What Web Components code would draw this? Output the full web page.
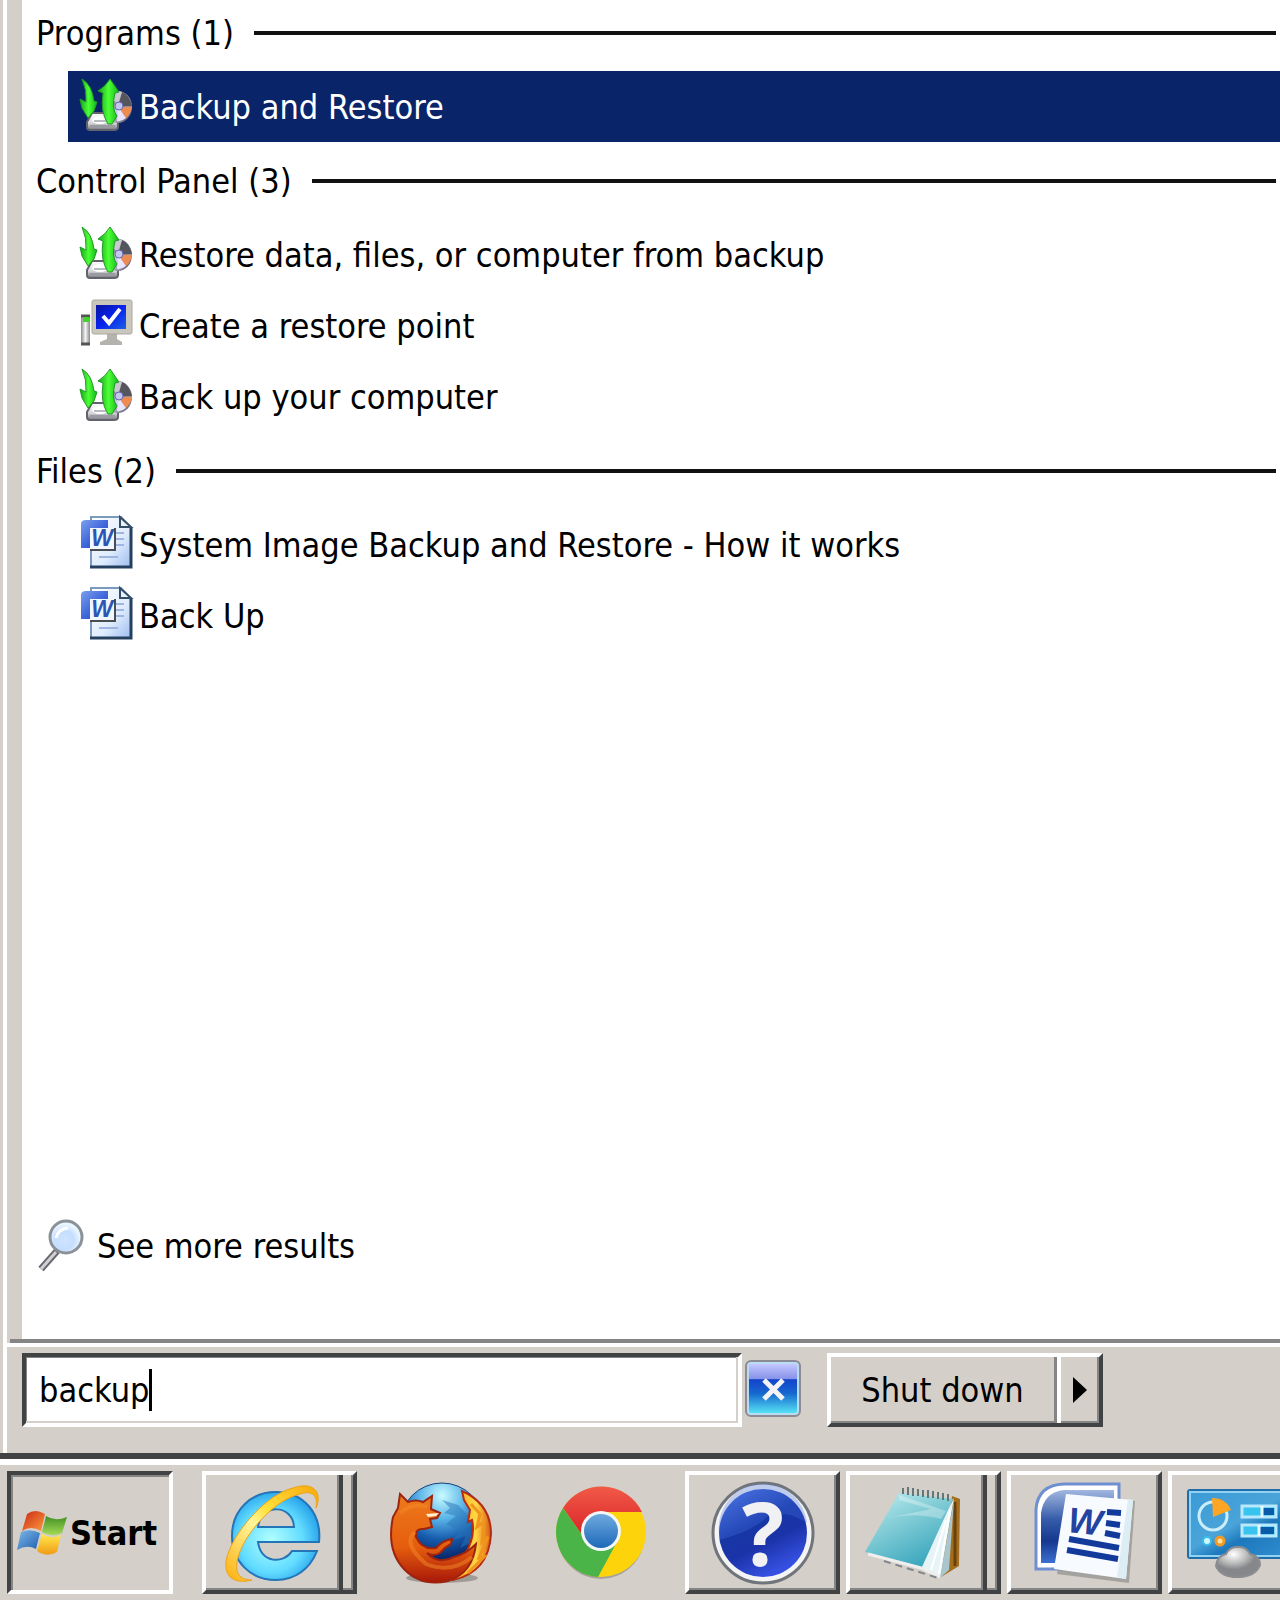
<!DOCTYPE html>
<html lang="en">
<head>
<meta charset="utf-8">
<title>Start menu</title>
<style>
    html, body {
        margin: 0;
        height: 100%;
        overflow: hidden;
    }

    body {
        --face: #d4cfc8;
        --dark: #404244;
        --shade: #858585;
        --select: #0a246a;
        color: #000;
        background: var(--face);
        font: 34px/40px "DejaVu Sans Condensed", "DejaVu Sans", sans-serif;
    }
</style>
</head>
<body>
<start-screen>
    <search-results>
        <result-group name="Programs (1)">
            <result-item icon="backup" selected>Backup and Restore</result-item>
        </result-group>
        <result-group name="Control Panel (3)">
            <result-item icon="backup">Restore data, files, or computer from backup</result-item>
            <result-item icon="monitor">Create a restore point</result-item>
            <result-item icon="backup">Back up your computer</result-item>
        </result-group>
        <result-group name="Files (2)">
            <result-item icon="doc">System Image Backup and Restore - How it works</result-item>
            <result-item icon="doc">Back Up</result-item>
        </result-group>
        <more-link slot="more">See more results</more-link>
    </search-results>
    <search-bar slot="bar" value="backup"></search-bar>
    <task-bar slot="tasks">
        <start-button>Start</start-button>
        <task-button icon="ie" label="Internet Explorer" stacked></task-button>
        <task-button icon="firefox" label="Firefox" flat></task-button>
        <task-button icon="chrome" label="Chrome" flat></task-button>
        <task-button icon="help" label="Help"></task-button>
        <task-button icon="notepad" label="Notepad" stacked></task-button>
        <task-button icon="word" label="Word"></task-button>
        <task-button icon="panel" label="Control Panel"></task-button>
    </task-bar>
</start-screen>

<script>
const icons = {
    backup: `<svg viewBox="0 0 52 54" width="52" height="54">
        <defs>
            <linearGradient id="dr" x2="0" y2="1"><stop offset="0" stop-color="#fff"/><stop offset=".6" stop-color="#d5d5da"/><stop offset="1" stop-color="#777880"/></linearGradient>
            <linearGradient id="dc" x2="1" y2="1"><stop offset="0" stop-color="#f0f0f0"/><stop offset=".3" stop-color="#77767c"/><stop offset=".55" stop-color="#d0cfe8"/><stop offset="1" stop-color="#37363c"/></linearGradient>
            <linearGradient id="gr" x2="1"><stop offset="0" stop-color="#15a51a"/><stop offset=".5" stop-color="#4dff36"/><stop offset="1" stop-color="#12b51a"/></linearGradient>
        </defs>
        <path d="M12 35H33L38 44V49Q38 52 34 52H10Q7 52 7 49V44Z" fill="url(#dr)" stroke="#62636b" stroke-width="2"/>
        <path d="M10 48H35" stroke="#9a9aa2" stroke-width="2"/>
        <ellipse cx="20" cy="42" rx="8" ry="4" fill="#fff"/>
        <path d="M14 43H26" stroke="#b9bac2" stroke-width="2"/>
        <ellipse cx="38" cy="29" rx="14" ry="16" fill="url(#dc)"/>
        <path d="M38 29L42 14Q50 17 52 28Z" fill="#55555d"/>
        <path d="M28 18Q34 11 42 14L38 26Z" fill="#c9c9cf"/>
        <path d="M38 29L52 29Q51 36 46 40Z" fill="#ee8b50"/>
        <path d="M38 29L46 40Q41 44 37 43Z" fill="#e9e4ff"/>
        <circle cx="39" cy="28" r="4" fill="#c5c7ed" stroke="#6569b5"/>
        <path d="M2 1Q12 7 14 23L17 24L14 33L8 40L2 30L0 21L6 24Q7 12 2 1Z" fill="url(#gr)" stroke="#209a25"/>
        <path d="M30 1L39 14L35 15Q31 31 37 38L32 46H28Q20 34 23 15L18 13Q26 8 30 1Z" fill="url(#gr)" stroke="#209a25"/>
    </svg>`,
    monitor: `<svg viewBox="0 0 52 54" width="52" height="54">
        <defs>
            <linearGradient id="sc" x2="1" y2="1"><stop offset="0" stop-color="#0714a0"/><stop offset=".5" stop-color="#0823ee"/><stop offset="1" stop-color="#1c62e4"/></linearGradient>
            <linearGradient id="tw" x2="1"><stop offset="0" stop-color="#8b8b8b"/><stop offset=".5" stop-color="#f4f4f4"/><stop offset="1" stop-color="#888"/></linearGradient>
        </defs>
        <path d="M27 36H37V42L42 45V48H20V45L27 42Z" fill="#b4b3ad"/>
        <rect x="12" y="3" width="40" height="34" rx="2" fill="#c9c6bc" stroke="#aaa89f"/>
        <rect x="16" y="8" width="30" height="24" fill="url(#sc)"/>
        <path d="M23 19L29 26L40 12" fill="none" stroke="#fff" stroke-width="4"/>
        <rect x="1" y="18" width="9" height="30" fill="url(#tw)"/>
        <path d="M1 19H10M1 47H10" stroke="#555" stroke-width="3"/>
        <rect x="3" y="20" width="6" height="5" fill="#41d52b"/>
    </svg>`,
    doc: `<svg viewBox="0 0 52 54" width="52" height="54">
        <defs>
            <linearGradient id="pg" x2="1" y2="1"><stop offset="0" stop-color="#fff"/><stop offset=".6" stop-color="#dfecfd"/><stop offset="1" stop-color="#9cbcf0"/></linearGradient>
            <linearGradient id="bl" x2="1" y2="1"><stop offset="0" stop-color="#7ba0ee"/><stop offset=".5" stop-color="#4269dc"/><stop offset="1" stop-color="#1c3fae"/></linearGradient>
        </defs>
        <path d="M11 1H41L51 12V51H11Z" fill="url(#pg)" stroke="#7b9bbd" stroke-width="2"/>
        <path d="M51 11V51H10" fill="none" stroke="#25405f" stroke-width="3"/>
        <path d="M40 1V11H51Z" fill="#eaf3fc" stroke="#344d69" stroke-width="2"/>
        <path d="M36 17H44M36 23H44M36 29H44M19 41H38" stroke="#9fb6e2" stroke-width="2"/>
        <path d="M1 8Q1 4 6 4H28V12H10V32H1Z" fill="url(#bl)"/>
        <rect x="10" y="12" width="25" height="21" fill="#f1f7ff"/>
        <path d="M35 12V34H10" fill="none" stroke="#4a4e52" stroke-width="2"/>
        <text x="22" y="30" text-anchor="middle" font-family="Liberation Sans" font-size="23" font-weight="700" font-style="italic" fill="#2c56b5">W</text>
    </svg>`,
    search: `<svg viewBox="0 0 46 54" width="46" height="54">
        <defs><radialGradient id="ln" cx=".45" cy=".6"><stop offset="0" stop-color="#cfe3ff"/><stop offset=".6" stop-color="#c5deff"/><stop offset="1" stop-color="#eaf6ff"/></radialGradient></defs>
        <path d="M3 50L19 32" stroke="#66666c" stroke-width="7"/>
        <path d="M3 50L18 33" stroke="#d2d0d6" stroke-width="3"/>
        <circle cx="28" cy="18" r="16" fill="url(#ln)" stroke="#8b9198" stroke-width="3"/>
        <path d="M18 19Q20 10 30 9" fill="none" stroke="#fff" stroke-width="3"/>
    </svg>`,
    flag: `<svg viewBox="0 0 50 46" width="50" height="46">
        <defs>
            <linearGradient id="f1" y2="1"><stop offset="0" stop-color="#c72814"/><stop offset="1" stop-color="#ff9a3d"/></linearGradient>
            <linearGradient id="f2" x2="0" y2="1"><stop offset="0" stop-color="#3f8f25"/><stop offset="1" stop-color="#a5db55"/></linearGradient>
            <linearGradient id="f3" y2="1"><stop offset="0" stop-color="#7fb8ea"/><stop offset="1" stop-color="#1d5fae"/></linearGradient>
            <linearGradient id="f4" x2="0" y2="1"><stop offset="0" stop-color="#ffe94d"/><stop offset="1" stop-color="#f09b15"/></linearGradient>
        </defs>
        <path d="M10 4Q18-2 28 4L24 21Q14 15 5 21Z" fill="url(#f1)"/>
        <path d="M29 6Q38 12 50 7L45 23Q35 28 25 22Z" fill="url(#f2)"/>
        <path d="M4 22Q13 18 23 23L19 39Q10 34 0 40Z" fill="url(#f3)"/>
        <path d="M25 24Q34 30 44 25L40 42Q30 48 20 41Z" fill="url(#f4)"/>
    </svg>`,
    ie: `<svg viewBox="0 0 96 98" width="96" height="98">
        <defs>
            <radialGradient id="eb" cx=".45" cy=".55" r=".6"><stop offset="0" stop-color="#b2ffff"/><stop offset=".6" stop-color="#62dcff"/><stop offset="1" stop-color="#1f9be8"/></radialGradient>
            <linearGradient id="er" x1="1" y1="0" x2="0" y2="1"><stop offset="0" stop-color="#f8a90d"/><stop offset=".4" stop-color="#ffe03b"/><stop offset=".55" stop-color="#fff69c"/><stop offset="1" stop-color="#fdae0c"/></linearGradient>
        </defs>
        <path fill-rule="evenodd" d="M51 8C79 8 97 30 94 58H33C36 80 59 80 67 67H92C85 85 70 96 51 96C25 96 7 77 7 52C7 26 26 8 51 8ZM33 43H69C68 20 36 19 33 43Z" fill="url(#eb)" stroke="#2474b8" stroke-width="2"/>
        <path d="M91 24C98 8 88-3 68 4C43 10 14 42 4 67C-4 86 3 102 27 96C8 96 9 80 17 63C27 42 52 16 72 11C87 5 93 11 91 24Z" fill="url(#er)" stroke="#eda217"/>
    </svg>`,
    firefox: `<svg viewBox="0 0 102 102" width="102" height="102">
        <defs>
            <radialGradient id="gl" cx=".5" cy=".15" r=".8"><stop offset="0" stop-color="#c8fbff"/><stop offset=".35" stop-color="#59b3e8"/><stop offset=".65" stop-color="#175cae"/><stop offset="1" stop-color="#061c5c"/></radialGradient>
            <linearGradient id="fx" x2="0" y2="1"><stop offset="0" stop-color="#ee7a1c"/><stop offset=".6" stop-color="#e55d0e"/><stop offset="1" stop-color="#a81809"/></linearGradient>
            <linearGradient id="ft" x2="1"><stop offset="0" stop-color="#ff9a16"/><stop offset=".6" stop-color="#ffd945"/><stop offset="1" stop-color="#d95a12"/></linearGradient>
        </defs>
        <ellipse cx="52" cy="96" rx="36" ry="5" fill="#000" opacity=".25"/>
        <circle cx="52" cy="43" r="42" fill="url(#gl)" stroke="#173f7c"/>
        <path d="M52 18L60 26L54 31L66 34L56 42L70 49L63 58L76 54L70 66L82 60L80 35L68 23Z" fill="#2a76b8" opacity=".5"/>
        <path d="M72 9Q101 22 101 52Q99 90 63 98Q68 83 80 72L74 74Q86 55 82 38L78 40L80 28L74 18Z" fill="url(#ft)" stroke="#b62d16" stroke-width="2"/>
        <path d="M81 22L90 32L87 45L94 40L92 60L98 55L89 76L94 75L78 91" fill="none" stroke="#f1941d" stroke-width="3"/>
        <path d="M10 12L18 20Q26 17 33 20L42 14L41 27L50 31L47 36L40 37L42 45L34 47Q25 46 26 55Q32 68 46 66Q53 58 62 57L61 62Q55 65 50 71Q43 75 37 71Q48 83 64 75Q76 72 86 62Q83 91 58 99Q31 105 14 87Q-4 68 3 35L8 26Z" fill="url(#fx)" stroke="#9c2410" stroke-width="2"/>
        <path d="M10 31Q22 20 37 25M25 50Q12 61 36 82Q62 92 82 75" fill="none" stroke="#f48a28" stroke-width="4" opacity=".5"/>
        <path d="M36 32L49 31L46 34L38 35Z" fill="#fff0d5"/>
    </svg>`,
    chrome: `<svg viewBox="0 0 94 96" width="94" height="96">
        <defs>
            <linearGradient id="cr" x2="0" y2="1"><stop offset="0" stop-color="#f15a47"/><stop offset="1" stop-color="#d9252a"/></linearGradient>
            <linearGradient id="cb" x2="0" y2="1"><stop offset="0" stop-color="#6eaae0"/><stop offset="1" stop-color="#1e69b8"/></linearGradient>
        </defs>
        <ellipse cx="46" cy="49" rx="44" ry="45" fill="#000" opacity=".22"/>
        <circle cx="46" cy="47" r="45" fill="#fdd30b"/>
        <path d="M8 23A45 45 0 0 1 87 27H46A19 19 0 0 0 27 50Z" fill="url(#cr)"/>
        <path d="M8 23A45 45 0 0 0 43 92L62 57Q54 66 40 64Q30 59 27 50Z" fill="#4ab449"/>
        <circle cx="46" cy="46" r="20" fill="#f4f6f8"/>
        <circle cx="46" cy="46" r="17" fill="url(#cb)"/>
    </svg>`,
    help: `<svg viewBox="0 0 104 104" width="104" height="104">
        <defs>
            <linearGradient id="hb" x2=".5" y2="1"><stop offset="0" stop-color="#5078e8"/><stop offset=".48" stop-color="#1737a5"/><stop offset=".7" stop-color="#1b32a8"/><stop offset="1" stop-color="#3550e0"/></linearGradient>
        </defs>
        <circle cx="52" cy="52" r="50" fill="#f4f4f4" stroke="#70757b" stroke-width="3"/>
        <circle cx="52" cy="52" r="44" fill="url(#hb)"/>
        <path d="M8 59Q43 50 57 35Q75 28 96 42A44 44 0 0 0 8 52Z" fill="#4672e0" opacity=".3"/>
        <text x="52" y="85" text-anchor="middle" font-family="Open Sans" font-size="88" font-weight="700" fill="#f1f1f3">?</text>
    </svg>`,
    notepad: `<svg viewBox="0 0 106 96" width="106" height="96">
        <defs>
            <linearGradient id="nt" x2=".6" y2="1"><stop offset="0" stop-color="#c4f1f4"/><stop offset=".4" stop-color="#8bd1d9"/><stop offset="1" stop-color="#3ba7bd"/></linearGradient>
        </defs>
        <path d="M88 11L96 14L95 81L77 92Z" fill="#a46d1e"/>
        <path d="M91 17V81" stroke="#68420d" stroke-width="3"/>
        <path d="M90 13L76 93L56 81Z" fill="#e6f4f7"/>
        <path d="M90 14L85 85L76 93Z" fill="#a9c6cc"/>
        <path d="M86 25L75 89M82 35L67 85" stroke="#fff" stroke-width="2"/>
        <path d="M35 8L89 14L58 82L1 67Z" fill="url(#nt)"/>
        <path d="M35 15L67 24L24 33Q51 27 77 34L82 26L35 10Z" fill="#fff" opacity=".3"/>
        <path d="M4 69L57 83L76 92" fill="none" stroke="#eee" stroke-width="3"/>
        <path d="M20 76L74 93" stroke="#80868a" stroke-width="2" stroke-dasharray="7 5"/>
        <path d="M39 3V9M44 2V10M49 3V11M54 4V11M59 5V12M64 5V13M69 6V13M74 7V14M79 8V15M84 9V16" stroke="#62777a" stroke-width="2"/>
    </svg>`,
    word: `<svg viewBox="0 0 102 102" width="102" height="102">
        <defs><linearGradient id="wb" x2="0" y2="1"><stop offset="0" stop-color="#a2b7e0"/><stop offset=".4" stop-color="#365ca9"/><stop offset=".7" stop-color="#16388f"/><stop offset="1" stop-color="#3b70d0"/></linearGradient></defs>
        <path d="M2 87V27Q4 3 30 2H85V87Z" fill="#fff" stroke="#6e8fd0" stroke-width="3"/>
        <path d="M7 81V31Q10 10 30 8H80V81Z" fill="url(#wb)"/>
        <path d="M36 15L101 19L95 101L23 92Z" fill="#8a8b88" opacity=".65"/>
        <path d="M32 12L99 18L92 97L20 87Z" fill="#f7fbff"/>
        <path d="M94 17L99 18L92 97L83 95Z" fill="#dceef4"/>
        <text x="33" y="50" transform="rotate(6 33 50)" font-family="Liberation Sans" font-size="36" font-weight="700" font-style="italic" fill="#2443a0">W</text>
        <path d="M73 30L87 31M72 41L86 43M71 51L86 54M35 57L85 66M33 68L84 77" stroke="#123a9b" stroke-width="6"/>
    </svg>`,
    panel: `<svg viewBox="0 0 120 92" width="120" height="92">
        <defs>
            <linearGradient id="pb" x2="1" y2="1"><stop offset="0" stop-color="#3b9ad6"/><stop offset=".45" stop-color="#4aa4d9"/><stop offset=".6" stop-color="#1d78bd"/><stop offset="1" stop-color="#3492d2"/></linearGradient>
            <radialGradient id="bt" cx=".4" cy=".25"><stop offset="0" stop-color="#fff"/><stop offset=".6" stop-color="#bbb"/><stop offset="1" stop-color="#85878a"/></radialGradient>
        </defs>
        <rect x="1" y="2" width="118" height="70" rx="3" fill="#1f6eab"/>
        <rect x="4" y="5" width="112" height="64" fill="url(#pb)" stroke="#91d2f3" stroke-width="2"/>
        <circle cx="27" cy="29" r="14" fill="none" stroke="#c9edf9" stroke-width="3"/>
        <path d="M26 11Q40 11 45 23L27 30Z" fill="#ffa525"/>
        <rect x="56" y="19" width="34" height="11" fill="#39c4ef" stroke="#b7e8fb" stroke-width="3"/>
        <rect x="56" y="38" width="34" height="11" fill="#39c4ef" stroke="#b7e8fb" stroke-width="3"/>
        <path d="M77 21H88V28H77ZM74 40H88V47H74Z" fill="#0a5ba8"/>
        <path d="M76 19V30M73 38V49" stroke="#e5faff" stroke-width="3"/>
        <circle cx="21" cy="54" r="4" fill="#cff7ff" stroke="#39bee8" stroke-width="2"/>
        <circle cx="34" cy="54" r="4" fill="#ffe1a0" stroke="#f39a24" stroke-width="3"/>
        <path d="M30 79Q31 69 40 67Q44 59 52 60Q60 59 64 67Q74 69 74 78Q69 90 51 90Q35 90 30 79Z" fill="url(#bt)" stroke="#8a8c90" stroke-width="2"/>
    </svg>`,
    cross: `<svg viewBox="0 0 56 57" width="56" height="57">
        <defs><linearGradient id="xb" x2="0" y2="1"><stop offset="0" stop-color="#c4c7ff"/><stop offset=".3" stop-color="#8792e8"/><stop offset=".32" stop-color="#1444cc"/><stop offset=".6" stop-color="#1668cf"/><stop offset="1" stop-color="#55e2f5"/></linearGradient></defs>
        <rect x="1" y="1" width="54" height="55" rx="5" fill="#b8dcf0" stroke="#8d8b96" stroke-width="2"/>
        <rect x="4" y="4" width="48" height="49" rx="2" fill="url(#xb)"/>
        <path d="M19 20L38 39M38 20L19 39" stroke="#f2f2f7" stroke-width="5"/>
    </svg>`
};

const base = `
    :host, * { box-sizing: border-box; }
    svg { display: block; flex: none; overflow: visible; }
    button, input { margin: 0; padding: 0; border: 0; border-radius: 0; font: inherit; color: inherit; background: none; outline: none; }
`;

function define(tag, render) {
    customElements.define(tag, class extends HTMLElement {
        constructor() {
            super();
            this.attachShadow({ mode: "open" });
        }

        connectedCallback() {
            const template = document.createElement("template");
            template.innerHTML = "<style>" + base + "</style>" + render(this);
            this.shadowRoot.replaceChildren(template.content.cloneNode(true));
        }
    });
}

define("start-screen", () => `
    <style>
        :host { display: flex; flex-direction: column; height: 100%; }
        .menu { flex: 1; min-height: 0; display: flex; flex-direction: column; margin-left: 3px; border-left: 4px solid #fff; }
        .results { flex: 1; min-height: 0; display: flex; margin-left: 3px; padding-left: 12px; border-bottom: 4px solid var(--shade); }
    </style>
    <div class="menu">
        <div class="results"><slot></slot></div>
        <slot name="bar"></slot>
    </div>
    <slot name="tasks"></slot>
`);

define("search-results", () => `
    <style>
        :host { flex: 1; min-width: 0; display: flex; flex-direction: column; justify-content: space-between; overflow: hidden; background: #fff; }
        .groups { margin-top: -6px; }
        .more { padding: 0 16px 66px; }
    </style>
    <div class="groups"><slot></slot></div>
    <div class="more"><slot name="more"></slot></div>
`);

define("result-group", el => `
    <style>
        :host { display: block; }
        header { display: flex; align-items: center; gap: 20px; height: 77px; padding: 0 4px 0 14px; }
        h2 { margin: 0; font: inherit; white-space: nowrap; }
        .rule { flex: 1; height: 4px; background: #111; }
    </style>
    <header><h2>${el.getAttribute("name")}</h2><span class="rule"></span></header>
    <slot></slot>
`);

define("result-item", el => `
    <style>
        :host { display: block; margin-left: 46px; }
        :host([selected]) { color: #fff; background: var(--select); }
        button { display: flex; align-items: center; gap: 7px; width: 100%; height: 71px; padding-left: 12px; text-align: left; white-space: nowrap; }
        svg { margin-bottom: 4px; }
    </style>
    <button type="button">${icons[el.getAttribute("icon")]}<span><slot></slot></span></button>
`);

define("more-link", () => `
    <style>
        :host { display: block; }
        a { display: flex; align-items: center; gap: 13px; color: inherit; text-decoration: none; }
    </style>
    <a href="#">${icons.search}<span><slot></slot></span></a>
`);

define("search-bar", el => `
    <style>
        :host { flex: none; display: flex; align-items: flex-start; height: 110px; padding: 6px 0 0 15px; border-top: 4px solid #fff; }
        .field { flex: 0 1 720px; display: flex; align-items: center; height: 74px; padding-left: 13px; background: #fff;
            border: 4px solid; border-color: var(--dark) #fff #fff var(--dark); box-shadow: inset -2px -2px var(--face), inset 1px 1px var(--shade); }
        input { field-sizing: content; height: 44px; }
        .caret { width: 3px; height: 42px; background: #000; }
        .clear { margin: 7px 26px 0 3px; }
        .split { flex: none; display: flex; height: 74px; border: 4px solid; border-color: #fff var(--dark) var(--dark) #fff; box-shadow: inset -2px -2px var(--shade); }
        .down { width: 226px; border-right: 3px solid var(--shade); }
        .more { display: flex; align-items: center; width: 42px; padding-left: 12px; border-left: 4px solid #fff; }
    </style>
    <label class="field">
        <input type="text" aria-label="Search programs and files" value="${el.getAttribute("value")}"><span class="caret"></span>
    </label>
    <button class="clear" type="button" aria-label="Clear">${icons.cross}</button>
    <div class="split">
        <button class="down" type="button">Shut down</button>
        <button class="more" type="button" aria-label="More options"><svg width="14" height="26" viewBox="0 0 14 26"><path d="M0 0L14 13L0 26Z"/></svg></button>
    </div>
`);

define("task-bar", () => `
    <style>
        :host { flex: none; display: block; border-top: 6px solid var(--dark); }
        nav { display: flex; gap: 6px; height: 141px; padding: 6px 0 6px 7px; border-top: 6px solid #fff; overflow: hidden; }
    </style>
    <nav><slot></slot></nav>
`);

define("start-button", () => `
    <style>
        :host { flex: none; display: block; margin-right: 23px; }
        button { display: flex; align-items: center; gap: 3px; width: 166px; height: 100%; padding-left: 6px; font-weight: 700;
            border: 4px solid; border-color: var(--dark) #fff #fff var(--dark); box-shadow: inset 2px 2px var(--shade); }
    </style>
    <button type="button">${icons.flag}<span><slot></slot></span></button>
`);

define("task-button", el => `
    <style>
        :host { flex: none; display: block; }
        button { display: flex; width: 155px; height: 100%; border: 4px solid; border-color: #fff var(--dark) var(--dark) #fff; box-shadow: inset -2px -2px var(--shade); }
        .icon { flex: 1; min-width: 0; height: 100%; display: flex; align-items: center; justify-content: center; }
        :host([flat]) button { border-color: transparent; box-shadow: none; }
        :host([stacked]) .icon { border-right: 4px solid var(--dark); box-shadow: inset -2px 0 var(--shade); }
        :host([stacked]) button { padding-right: 10px; }
        :host([icon="panel"]) .icon { justify-content: flex-start; padding-left: 14px; }
    </style>
    <button type="button" aria-label="${el.getAttribute("label")}"><span class="icon">${icons[el.getAttribute("icon")]}</span></button>
`);
</script>
</body>
</html>
